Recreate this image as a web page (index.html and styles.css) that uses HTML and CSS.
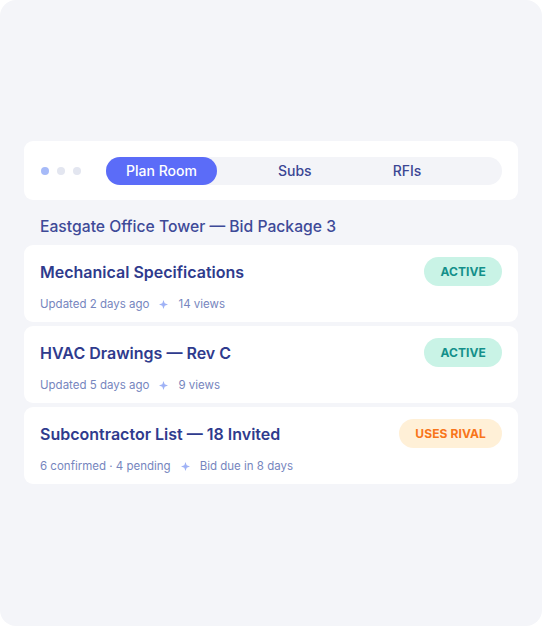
FILE: index.html
```html
<!DOCTYPE html>
<html lang="en">

<head>
    <meta charset="UTF-8">
    <meta name="viewport" content="width=device-width, initial-scale=1.0">
    <title>Plan Room</title>
    <link rel="stylesheet" href="styles.css">
</head>

<body>
    <div class="panel">
        <!-- Top bar with window dots and tabs -->
        <div class="topbar">
            <div class="dots">
                <span class="dot dot-on"></span>
                <span class="dot"></span>
                <span class="dot"></span>
            </div>
            <nav class="tabs">
                <a class="tab tab-active" href="#">Plan Room</a>
                <a class="tab" href="#">Subs</a>
                <a class="tab" href="#">RFIs</a>
            </nav>
        </div>

        <h2 class="project">Eastgate Office Tower — Bid Package 3</h2>

        <!-- Documents list -->
        <div class="docs">
            <div class="doc">
                <div class="doc-row">
                    <span class="doc-title">Mechanical Specifications</span>
                    <span class="badge badge-active">ACTIVE</span>
                </div>
                <div class="doc-meta">
                    <span>Updated 2 days ago</span>
                    <svg class="spark" viewBox="0 0 10 10"><path d="M5 0 L6.3 3.7 L10 5 L6.3 6.3 L5 10 L3.7 6.3 L0 5 L3.7 3.7 Z"/></svg>
                    <span>14 views</span>
                </div>
            </div>
            <div class="doc">
                <div class="doc-row">
                    <span class="doc-title">HVAC Drawings — Rev C</span>
                    <span class="badge badge-active">ACTIVE</span>
                </div>
                <div class="doc-meta">
                    <span>Updated 5 days ago</span>
                    <svg class="spark" viewBox="0 0 10 10"><path d="M5 0 L6.3 3.7 L10 5 L6.3 6.3 L5 10 L3.7 6.3 L0 5 L3.7 3.7 Z"/></svg>
                    <span>9 views</span>
                </div>
            </div>
            <div class="doc">
                <div class="doc-row">
                    <span class="doc-title">Subcontractor List — 18 Invited</span>
                    <span class="badge badge-rival">USES RIVAL</span>
                </div>
                <div class="doc-meta">
                    <span>6 confirmed · 4 pending</span>
                    <svg class="spark" viewBox="0 0 10 10"><path d="M5 0 L6.3 3.7 L10 5 L6.3 6.3 L5 10 L3.7 6.3 L0 5 L3.7 3.7 Z"/></svg>
                    <span>Bid due in 8 days</span>
                </div>
            </div>
        </div>
    </div>
</body>

</html>
```

FILE: styles.css
```css
html,
body {
    margin: 0;
    background: #fff;
}

body {
    font-family: "Inter", "Liberation Sans", sans-serif;
}

.panel {
    width: 542px;
    height: 626px;
    box-sizing: border-box;
    background-color: #f4f5f9;
    border-radius: 16px;
    padding: 141px 24px 0;
}

.topbar {
    background: #fff;
    border-radius: 9px;
    padding: 16px 16px 15px;
    display: flex;
    align-items: center;
}

.dots {
    display: flex;
    gap: 8px;
    margin-left: 1px;
    width: 65px;
}

.dot {
    width: 8px;
    height: 8px;
    border-radius: 50%;
    background-color: #e3e6f0;
}

.dot-on {
    background-color: #a6baf8;
}

.tabs {
    flex: 1;
    display: flex;
    gap: 41px;
    height: 28px;
    background-color: #f3f4f8;
    border-radius: 14px;
}

.tab {
    padding: 0 20px;
    line-height: 28px;
    border-radius: 14px;
    font-size: 14px;
    font-weight: 500;
    color: #3b4694;
    text-decoration: none;
}

.tab-active {
    width: 71px;
    text-align: center;
    background-color: #5b6cf8;
    color: #fff;
}

.project {
    margin: 16px 16px 7px;
    font-size: 15.7px;
    line-height: 22px;
    font-weight: 500;
    color: #3e4a98;
}

.docs {
    display: flex;
    flex-direction: column;
    gap: 4px;
}

.doc {
    background: #fff;
    border-radius: 9px;
    padding: 12px 16px 10px;
}

.doc-row {
    display: flex;
    align-items: center;
    justify-content: space-between;
    height: 29px;
}

.doc-title {
    font-size: 16px;
    font-weight: 600;
    color: #2f3b8d;
}

.doc-meta {
    margin-top: 10px;
    display: flex;
    align-items: center;
    gap: 10px;
    font-size: 11.5px;
    line-height: 16px;
    color: #7686be;
}

.spark {
    width: 9px;
    height: 9px;
    fill: #9fb2f6;
}

.badge {
    height: 29px;
    line-height: 29px;
    padding: 0 16px;
    border-radius: 15px;
    font-size: 12px;
    font-weight: 700;
    letter-spacing: 0.1px;
}

.badge-active {
    background-color: #c9f3e6;
    color: #14908a;
}

.badge-rival {
    background-color: #fff0d7;
    color: #f8751a;
}
```
